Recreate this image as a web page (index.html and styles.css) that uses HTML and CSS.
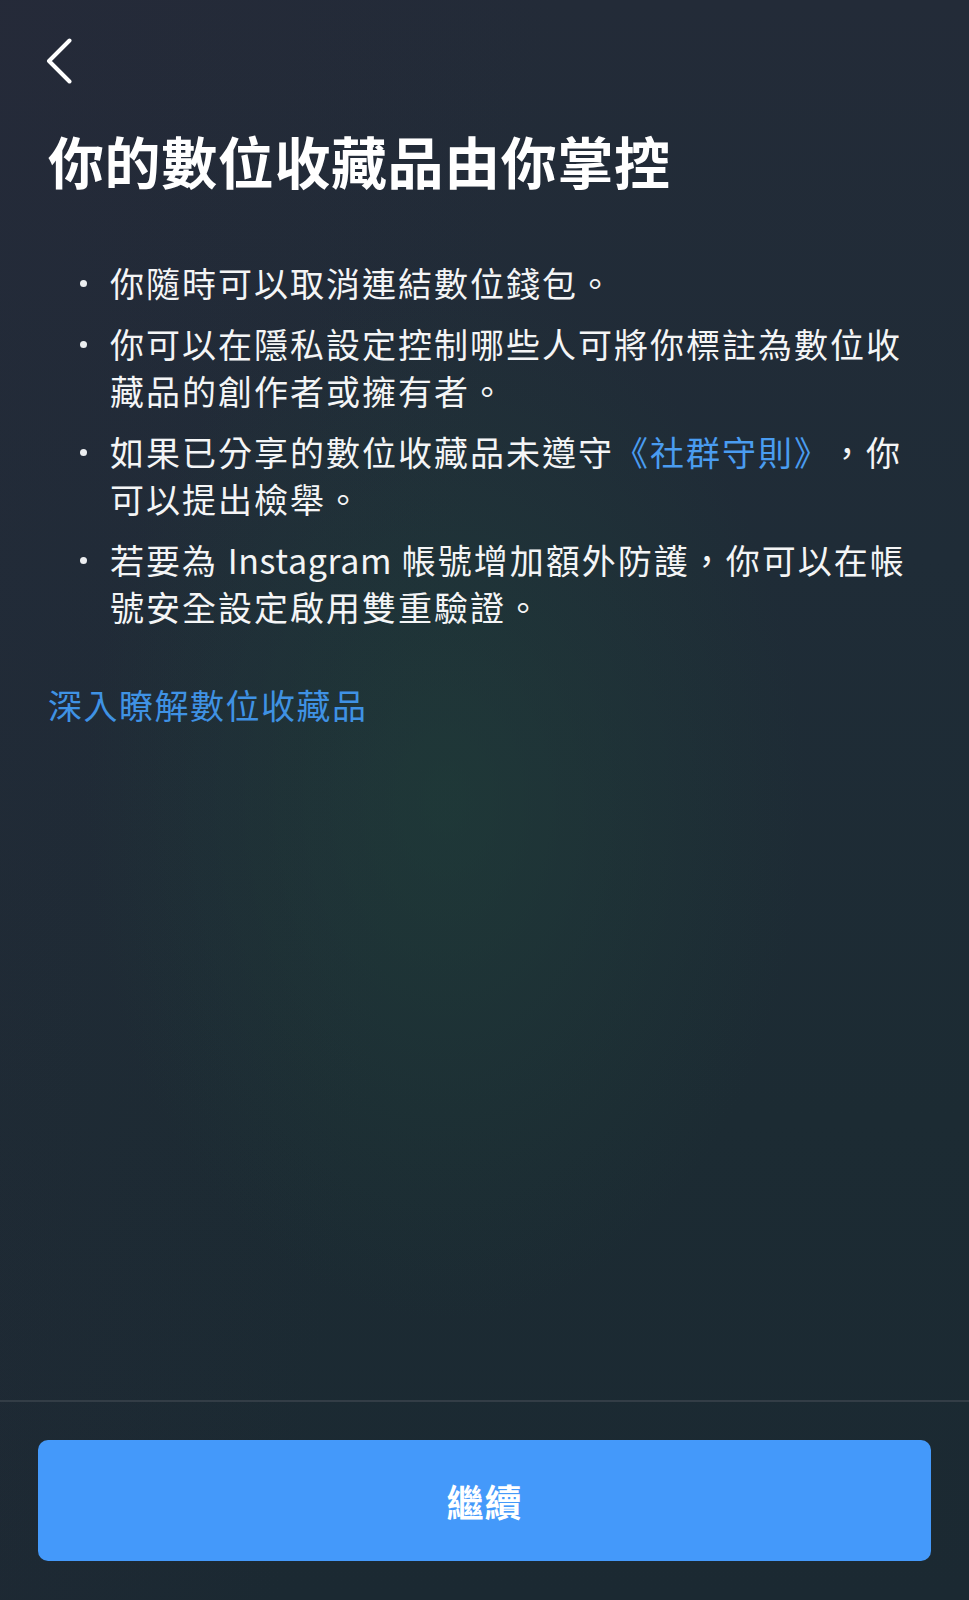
FILE: index.html
```html
<!DOCTYPE html>
<html lang="zh-Hant">
<head>
<meta charset="utf-8">
<title>你的數位收藏品由你掌控</title>
<link rel="stylesheet" href="styles.css">
</head>
<body>
<div class="screen">
  <main class="content">
    <button class="back" aria-label="返回">
      <svg class="back-icon" viewBox="0 0 28 46" width="28" height="46">
        <path d="M24.5 2.5 L4 23 L24.5 43.5" fill="none" stroke="#ffffff" stroke-width="4" stroke-linecap="round" stroke-linejoin="round"/>
      </svg>
    </button>
    <h1 class="title">你的數位收藏品由你掌控</h1>
    <ul class="points">
      <li>你隨時可以取消連結數位錢包。</li>
      <li>你可以在隱私設定控制哪些人可將你標註為數位收藏品的創作者或擁有者。</li>
      <li>如果已分享的數位收藏品未遵守<a class="inline-link" href="#">《社群守則》</a>，你可以提出檢舉。</li>
      <li>若要為 <span class="latin">Instagram</span> 帳號增加額外防護，你可以在帳號安全設定啟用雙重驗證。</li>
    </ul>
    <a class="more" href="#">深入瞭解數位收藏品</a>
  </main>
  <footer class="footer">
    <button class="continue">繼續</button>
  </footer>
</div>
</body>
</html>
```

FILE: styles.css
```css
html, body {
  margin: 0;
  padding: 0;
  background: #1c2a33;
}

.screen {
  width: 969px;
  height: 1600px;
  display: flex;
  flex-direction: column;
  font-family: "Noto Sans CJK TC", "Noto Sans", sans-serif;
  color: #ffffff;
  background:
    radial-gradient(ellipse 360px 520px at 46% 50%, rgba(32, 66, 58, 0.55), rgba(32, 66, 58, 0) 100%),
    linear-gradient(100deg, rgba(40, 40, 58, 0.35) 0%, rgba(40, 40, 58, 0) 45%),
    linear-gradient(180deg, #232b38 0%, #1f2c37 35%, #1c2b33 70%, #1b2932 100%);
  text-spacing-trim: space-all;
}

.content {
  flex: 1;
  padding: 0 59px 0 48px;
}

.back {
  display: block;
  margin: 38px 0 0 -3px;
  padding: 0;
  width: 28px;
  height: 46px;
  border: 0;
  background: none;
}

.back-icon {
  display: block;
}

.title {
  margin: 43px 0 0;
  font-size: 56px;
  line-height: 66px;
  font-weight: 700;
  letter-spacing: 0.6px;
}

.points {
  list-style: none;
  margin: 66px 0 0;
  padding: 0 0 0 62px;
  display: flex;
  flex-direction: column;
  gap: 14px;
}

.points li {
  position: relative;
  font-size: 34px;
  line-height: 47px;
  letter-spacing: 2px;
  color: #f4f5f6;
}

.points li::before {
  content: "";
  position: absolute;
  left: -30px;
  top: 21px;
  width: 7px;
  height: 7px;
  border-radius: 50%;
  background: #eceef0;
}

.latin {
  letter-spacing: 0.6px;
}

.inline-link {
  color: #4a9cf0;
  text-decoration: none;
}

.more {
  display: block;
  margin-top: 51px;
  font-size: 34px;
  line-height: 47px;
  letter-spacing: 1.5px;
  color: #3f92e4;
  text-decoration: none;
}

.footer {
  border-top: 2px solid #333d46;
  padding: 38px 38px 39px;
}

.continue {
  display: block;
  width: 100%;
  height: 121px;
  border: 0;
  border-radius: 10px;
  background: #4499fa;
  color: #ffffff;
  font-family: "Noto Sans CJK TC", "Noto Sans", sans-serif;
  font-size: 37px;
  font-weight: 700;
  letter-spacing: 1px;
}
```
